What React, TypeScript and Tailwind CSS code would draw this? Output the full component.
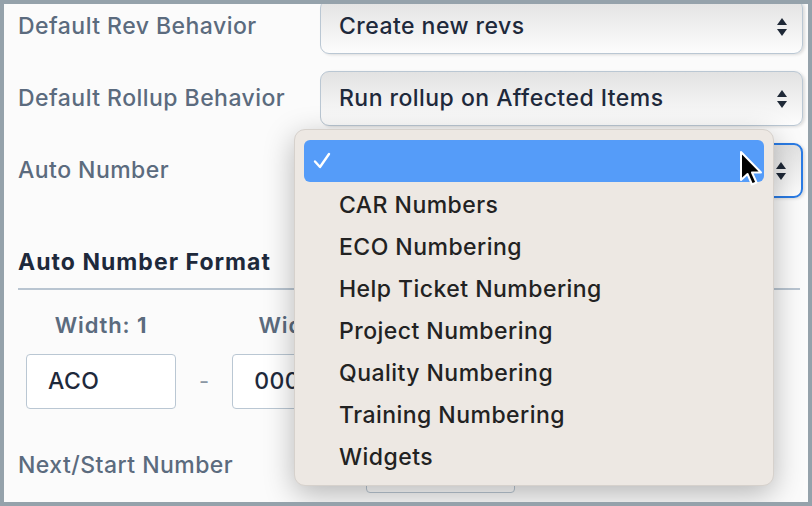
import React from 'react';

const font = { fontFamily: 'Inter, "Noto Sans", sans-serif' };

const Arrows: React.FC = () => (
  <svg width="12" height="20" viewBox="0 0 12 20" className="shrink-0">
    <path d="M6 1 L11 8 L1 8 Z" fill="#1f2937" />
    <path d="M6 19 L11 12 L1 12 Z" fill="#1f2937" />
  </svg>
);

const Select: React.FC<{ value?: string; focused?: boolean }> = ({ value, focused }) => (
  <div
    className={`h-[55px] flex items-center justify-between pl-[18px] pr-[14px] rounded-[9px] bg-gradient-to-b from-[#e2e2e2] to-[#fdfdfd] shadow-[2px_1px_3px_rgba(0,0,0,0.12)] ${
      focused ? 'border-2 border-[#2a7be4]' : 'border-[1.5px] border-[#bac7d3]'
    }`}
  >
    <span className="text-[23px] font-medium text-[#1e293b] tracking-[0.02em]">{value}</span>
    <Arrows />
  </div>
);

const Row: React.FC<{ label: string; children: React.ReactNode }> = ({ label, children }) => (
  <div className="flex items-center">
    <div className="w-[302px] text-[23px] font-medium text-[#5b6b7e] tracking-[0.02em]">{label}</div>
    <div className="flex-1">{children}</div>
  </div>
);

const options = [
  'CAR Numbers',
  'ECO Numbering',
  'Help Ticket Numbering',
  'Project Numbering',
  'Quality Numbering',
  'Training Numbering',
  'Widgets',
];

const Cursor: React.FC = () => (
  <svg width="30" height="40" viewBox="0 0 30 40" className="absolute left-[734px] top-[146px]">
    <path
      d="M3 2 L3 30 L9.5 24 L14 34.5 L18.5 32.5 L14 22.5 L23 22.5 Z"
      fill="#000"
      stroke="#fff"
      strokeWidth="2"
      strokeLinejoin="round"
    />
  </svg>
);

export default function App() {
  return (
    <div className="w-[812px] h-[506px] bg-[#95a2ab] p-[4px]" style={font}>
      <div className="relative w-full h-full bg-[#fbfbfb] overflow-hidden">
        <div className="pl-[14px] pr-[5px] -mt-[5px] flex flex-col gap-[17px]">
          <Row label="Default Rev Behavior">
            <Select value="Create new revs" />
          </Row>
          <Row label="Default Rollup Behavior">
            <Select value="Run rollup on Affected Items" />
          </Row>
          <Row label="Auto Number">
            <Select focused />
          </Row>
        </div>

        <div className="pl-[14px] pr-[8px] mt-[50px]">
          <div className="text-[23px] font-bold text-[#1e293b] tracking-[0.045em] leading-[28px]">
            Auto Number Format
          </div>
          <div className="mt-[12px] h-[1.5px] bg-[#b9c5d1]" />

          <div className="flex items-end gap-[23px] pl-[8px] mt-[22px]">
            <div className="flex flex-col items-center gap-[16px] w-[150px]">
              <div className="text-[22px] text-[#5b6b7e] font-semibold tracking-[0.04em] leading-[26px]">
                Width: <span className="font-bold">1</span>
              </div>
              <div className="w-[150px] h-[55px] border-[1.5px] border-[#bac7d3] rounded-[4px] bg-white flex items-center pl-[21px] text-[23px] font-medium tracking-[0.02em] text-[#1e293b]">
                ACO
              </div>
            </div>
            <div className="h-[55px] flex items-center text-[22px] text-[#8a96a3]">-</div>
            <div className="flex flex-col items-center gap-[16px] w-[150px]">
              <div className="text-[22px] text-[#5b6b7e] font-semibold tracking-[0.04em] leading-[26px]">
                Width: <span className="font-bold">5</span>
              </div>
              <div className="w-[150px] h-[55px] border-[1.5px] border-[#bac7d3] rounded-[4px] bg-white flex items-center pl-[21px] text-[23px] font-medium tracking-[0.02em] text-[#1e293b]">
                00001
              </div>
            </div>
          </div>

          <div className="flex items-center mt-[29px]">
            <div className="w-[348px] text-[23px] font-medium text-[#5b6b7e] tracking-[0.02em]">Next/Start Number</div>
            <div className="w-[149px] h-[55px] border-[1.5px] border-[#bac7d3] rounded-[4px] bg-white" />
          </div>
        </div>

        <div className="absolute left-[290px] top-[125px] w-[480px] h-[357px] bg-[#ede8e3] rounded-[11px] border border-[#d6d1cc] shadow-[0_8px_30px_rgba(0,0,0,0.28)] px-[9px] pt-[10px]">
          <div className="h-[42px] mb-[1px] rounded-[6px] bg-[#559cf9] flex items-center pl-[8px]">
            <svg width="20" height="20" viewBox="0 0 20 20">
              <path d="M3 10.5 L8 16 L17 3" fill="none" stroke="#fff" strokeWidth="2.4" strokeLinecap="round" strokeLinejoin="round" />
            </svg>
          </div>
          {options.map((o) => (
            <div key={o} className="h-[42px] flex items-center pl-[35px] pt-[2px] text-[23px] font-medium text-[#222222] tracking-[0.02em]">
              {o}
            </div>
          ))}
        </div>

        <Cursor />
      </div>
    </div>
  );
}
